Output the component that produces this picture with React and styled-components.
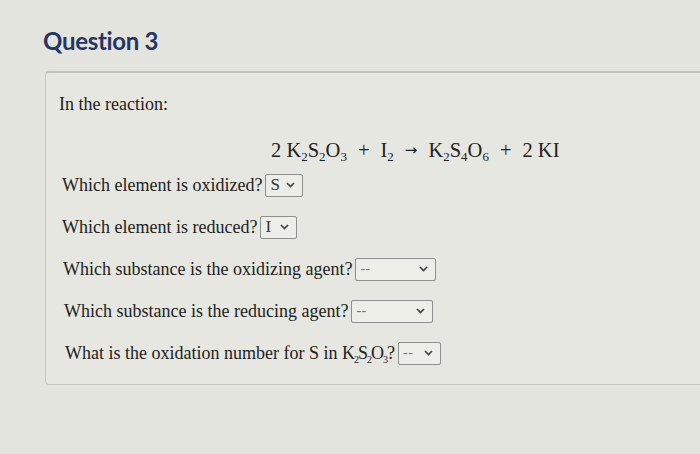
import React from "react";
import styled, { createGlobalStyle } from "styled-components";

const Global = createGlobalStyle`
  html, body { margin: 0; padding: 0; }
  body {
    width: 700px; height: 454px; overflow: hidden;
    background: #e3e4dd;
    font-family: "Liberation Serif", "Times New Roman", serif;
    color: #222;
  }
`;

const Page = styled.div`
  padding: 26px 0 0 43px;
`;

const Title = styled.h1`
  margin: 0;
  font-family: Lato, "Noto Sans", sans-serif;
  font-weight: 700;
  font-size: 24px;
  line-height: 30px;
  color: #253566;
  letter-spacing: -0.3px;
`;

const Card = styled.section`
  margin-top: 15px;
  margin-left: 2px;
  width: 760px;
  height: 314px;
  box-sizing: border-box;
  border: 1px solid #c6c8c4;
  border-top: 2px solid #bfc2c2;
  border-radius: 4px 0 0 4px;
  background: #e6e7e0;
  padding: 19px 13px 0 13px;
`;

const Para = styled.p`
  margin: 0;
  font-size: 18px;
  line-height: 24px;
`;

const Equation = styled.div`
  margin: 22px 0 0 0;
  padding-left: 212px;
  font-size: 20.5px;
  line-height: 24px;
`;

const Sub = styled.sub`
  font-size: 13px;
  vertical-align: -4px;
  line-height: 0;
`;

const Op = styled.span`
  margin: 0 11px;
`;

const Arrow = styled.span`
  font-family: "DejaVu Sans", sans-serif;
  font-size: 15px;
  margin: 0 11px;
  position: relative;
  top: -2px;
`;

const Rows = styled.div`
  margin-top: 9px;
  display: flex;
  flex-direction: column;
  gap: 18px;
`;

const Row = styled.div`
  display: flex;
  align-items: center;
  gap: 3px;
  height: 24px;
  padding-left: ${(p) => p.$indent || 3}px;
  font-size: 18px;
`;

const Select = styled.div`
  width: ${(p) => p.$w}px;
  height: 23px;
  box-sizing: border-box;
  border: 1px solid #8e908e;
  border-radius: 2px;
  background: #eeeee8;
  display: flex;
  align-items: center;
  justify-content: space-between;
  padding: 0 7px 0 4px;
  font-size: 17px;
  color: #333;
`;

const Dash = styled.span`
  font-size: 14px;
  color: #777;
  letter-spacing: 0.5px;
`;

const Chevron = () => (
  <svg width="9" height="6" viewBox="0 0 9 6">
    <path d="M1 1 L4.5 4.5 L8 1" fill="none" stroke="#444" strokeWidth="1.7" />
  </svg>
);

const Drop = ({ w, value }) => (
  <Select $w={w}>
    {value ? <span>{value}</span> : <Dash>--</Dash>}
    <Chevron />
  </Select>
);

const SmallSub = styled.sub`
  font-size: 10px;
  vertical-align: -4px;
  line-height: 0;
  margin: 0 -1px;
`;

export default function App() {
  return (
    <>
      <Global />
      <Page>
        <Title>Question 3</Title>
        <Card>
          <Para>In the reaction:</Para>
          <Equation>
            2 K<Sub>2</Sub>S<Sub>2</Sub>O<Sub>3</Sub>
            <Op>+</Op>I<Sub>2</Sub>
            <Arrow>→</Arrow>K<Sub>2</Sub>S<Sub>4</Sub>O<Sub>6</Sub>
            <Op>+</Op>2 KI
          </Equation>
          <Rows>
            <Row>
              Which element is oxidized? <Drop w={38} value="S" />
            </Row>
            <Row>
              Which element is reduced? <Drop w={37} value="I" />
            </Row>
            <Row $indent={4}>
              Which substance is the oxidizing agent? <Drop w={81} />
            </Row>
            <Row $indent={5}>
              Which substance is the reducing agent? <Drop w={82} />
            </Row>
            <Row $indent={6}>
              <span>
                What is the oxidation number for S in K<SmallSub>2</SmallSub>S
                <SmallSub>2</SmallSub>O<SmallSub>3</SmallSub>?
              </span>
              <Drop w={43} />
            </Row>
          </Rows>
        </Card>
      </Page>
    </>
  );
}
